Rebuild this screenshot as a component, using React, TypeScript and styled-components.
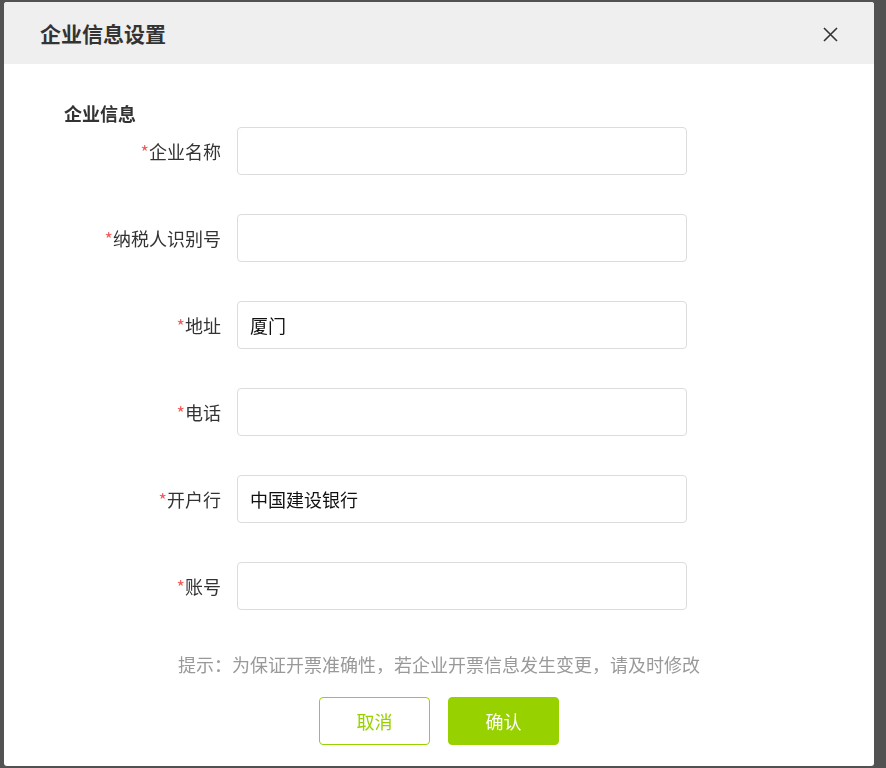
import styled, { createGlobalStyle } from "styled-components";

const GlobalStyle = createGlobalStyle`
  html, body {
    margin: 0;
    padding: 0;
    background: #fff;
    font-family: "Noto Sans CJK SC", "Noto Sans", sans-serif;
    color: #333;
  }
  * {
    box-sizing: border-box;
  }
`;

const Overlay = styled.div`
  position: fixed;
  inset: 0;
  background-color: rgba(0, 0, 0, 0.68);
  display: flex;
  align-items: flex-start;
  justify-content: flex-start;
  padding: 2px 0 0 4px;
`;

const Modal = styled.div`
  width: 870px;
  height: 764px;
  background-color: #fff;
  border-radius: 3px;
  overflow: hidden;
  display: flex;
  flex-direction: column;
`;

const Header = styled.div`
  height: 62px;
  background-color: #efefef;
  display: flex;
  align-items: center;
  justify-content: space-between;
  padding: 0 36px 0 36px;
`;

const Title = styled.h2`
  margin: 0;
  font-size: 21px;
  font-weight: bold;
  line-height: 28px;
  color: #333;
`;

const CloseButton = styled.button`
  width: 15px;
  height: 15px;
  padding: 0;
  border: none;
  background: transparent;
  cursor: pointer;
  display: flex;
  margin-top: 2px;
`;

const Body = styled.div`
  display: flex;
  flex-direction: column;
  padding: 37px 60px 0 60px;
`;

const SectionTitle = styled.div`
  font-size: 18px;
  font-weight: bold;
  line-height: 24px;
  color: #333;
  margin-bottom: 2px;
`;

const Form = styled.div`
  display: flex;
  flex-direction: column;
  gap: 39px;
`;

const Row = styled.div`
  display: flex;
  align-items: center;
`;

const Label = styled.label`
  width: 157px;
  margin-right: 16px;
  text-align: right;
  font-size: 18px;
  line-height: 24px;
  color: #333;
`;

const Star = styled.span`
  color: #f25a5a;
`;

const Input = styled.input`
  width: 450px;
  height: 48px;
  border: 1px solid #dcdcdc;
  border-radius: 4px;
  padding: 0 12px;
  font-family: "Noto Sans CJK SC", "Noto Sans", sans-serif;
  font-size: 18px;
  color: #111;
  outline: none;
  background: #fff;
`;

const Hint = styled.div`
  margin-top: 42px;
  text-align: center;
  font-size: 18px;
  line-height: 24px;
  color: #999;
`;

const Actions = styled.div`
  display: flex;
  justify-content: center;
  gap: 18px;
  margin-top: 21px;
`;

const Button = styled.button<{ primary?: boolean }>`
  width: 111px;
  height: 48px;
  border-radius: 4px;
  border: 1px solid #97d100;
  background-color: ${({ primary }) => (primary ? "#97d100" : "#fff")};
  color: ${({ primary }) => (primary ? "#fff" : "#97d100")};
  font-family: "Noto Sans CJK SC", "Noto Sans", sans-serif;
  font-size: 18px;
  cursor: pointer;
`;

const fields = [
  { label: "企业名称", value: "" },
  { label: "纳税人识别号", value: "" },
  { label: "地址", value: "厦门" },
  { label: "电话", value: "" },
  { label: "开户行", value: "中国建设银行" },
  { label: "账号", value: "" },
];

const App = () => {
  return (
    <>
      <GlobalStyle />
      <Overlay>
        <Modal>
          <Header>
            <Title>企业信息设置</Title>
            <CloseButton aria-label="关闭">
              <svg width="15" height="15" viewBox="0 0 15 15">
                <path
                  d="M1 1 L14 14 M14 1 L1 14"
                  stroke="#333"
                  strokeWidth="1.6"
                  fill="none"
                />
              </svg>
            </CloseButton>
          </Header>
          <Body>
            <SectionTitle>企业信息</SectionTitle>
            <Form>
              {fields.map((f) => (
                <Row key={f.label}>
                  <Label>
                    <Star>*</Star>
                    {f.label}
                  </Label>
                  <Input defaultValue={f.value} />
                </Row>
              ))}
            </Form>
          </Body>
          <Hint>提示：为保证开票准确性，若企业开票信息发生变更，请及时修改</Hint>
          <Actions>
            <Button>取消</Button>
            <Button primary>确认</Button>
          </Actions>
        </Modal>
      </Overlay>
    </>
  );
};

export default App;
